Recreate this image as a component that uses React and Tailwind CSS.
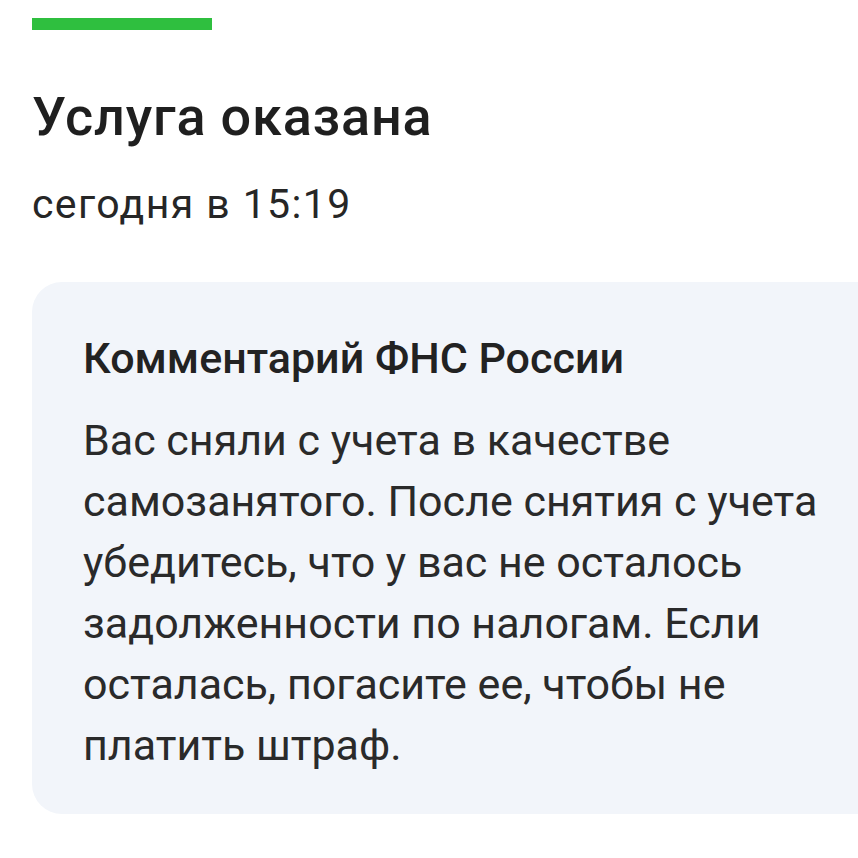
export default function App() {
  const lines = [
    "Вас сняли с учета в качестве",
    "самозанятого. После снятия с учета",
    "убедитесь, что у вас не осталось",
    "задолженности по налогам. Если",
    "осталась, погасите ее, чтобы не",
    "платить штраф.",
  ];
  return (
    <div className="w-[858px] h-[858px] bg-white overflow-hidden font-['Roboto',sans-serif] text-[#1f1f1f]">
      <div className="pl-8 pt-[18px]">
        <div className="w-[180px] h-[12px] bg-[#2fbf3f]" />
        <h1 className="mt-[54px] text-[54px] leading-[66px] font-medium tracking-[0.8px]">Услуга оказана</h1>
        <p className="mt-[29px] text-[41px] leading-[50px] tracking-[1.4px] text-[#262626]">сегодня в 15:19</p>
      </div>
      <div className="ml-8 mt-[53px] w-[860px] h-[532px] rounded-[30px] bg-[#f2f5fa] pl-[51px] pt-[48px]">
        <h2 className="text-[43px] leading-[56px] font-medium text-[#222]">Комментарий ФНС России</h2>
        <div className="mt-[24px] text-[43px] leading-[61px] text-[#2a2a2a]">
          {lines.map((l) => (
            <div key={l} className="whitespace-nowrap">{l}</div>
          ))}
        </div>
      </div>
    </div>
  );
}
